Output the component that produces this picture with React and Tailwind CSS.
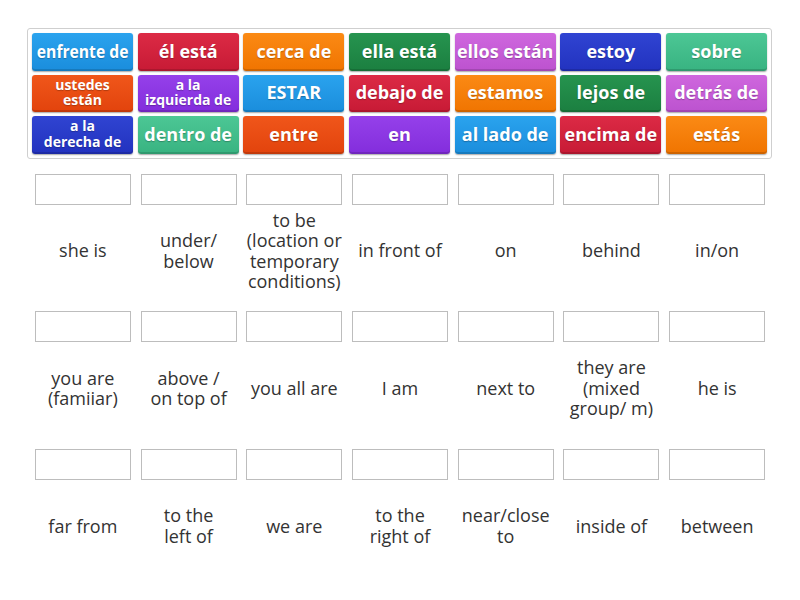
const COLORS = [
  'from-[#2aa3ee] to-[#1a8ddc]', // blue
  'from-[#dc2a45] to-[#c71a35]', // red
  'from-[#fb8a14] to-[#f07400]', // orange
  'from-[#26944f] to-[#1b7f40]', // dark green
  'from-[#cf67de] to-[#bc52cf]', // orchid
  'from-[#3044d2] to-[#2232bf]', // royal blue
  'from-[#4cc795] to-[#38b381]', // teal
  'from-[#f0561a] to-[#e2430c]', // orange red
  'from-[#9540ea] to-[#832ddc]', // purple
]

const TILES = [
  { t: 'enfrente de', squeeze: true },
  { t: 'él está' },
  { t: 'cerca de' },
  { t: 'ella está' },
  { t: 'ellos están' },
  { t: 'estoy' },
  { t: 'sobre' },
  { t: 'ustedes\nestán', small: true },
  { t: 'a la\nizquierda de', small: true },
  { t: 'ESTAR' },
  { t: 'debajo de' },
  { t: 'estamos' },
  { t: 'lejos de' },
  { t: 'detrás de' },
  { t: 'a la\nderecha de', small: true },
  { t: 'dentro de' },
  { t: 'entre' },
  { t: 'en' },
  { t: 'al lado de' },
  { t: 'encima de' },
  { t: 'estás' },
]

const ROWS = [
  ['she is', 'under/\nbelow', 'to be\n(location or\ntemporary\nconditions)', 'in front of', 'on', 'behind', 'in/on'],
  ['you are\n(famiiar)', 'above /\non top of', 'you all are', 'I am', 'next to', 'they are\n(mixed\ngroup/ m)', 'he is'],
  ['far from', 'to the\nleft of', 'we are', 'to the\nright of', 'near/close\nto', 'inside of', 'between'],
]

function Tile({ tile, color }) {
  let span = 'text-[18px] leading-[20px] whitespace-nowrap'
  if (tile.squeeze) span += ' inline-block scale-x-[0.87]'
  return (
    <div
      className={`h-[37.5px] pb-[2px] rounded-[3px] bg-linear-to-b ${color} shadow-[inset_0_-2px_0_rgba(0,0,0,0.14),0_1px_1.5px_rgba(0,0,0,0.35)] flex items-center justify-center text-center text-white font-bold whitespace-pre-line [text-shadow:0_1px_1px_rgba(0,0,0,0.25)] overflow-hidden`}
    >
      {tile.small ? (
        <span className="text-[14px] leading-[15.5px]">{tile.t}</span>
      ) : (
        <span className={span}>{tile.t}</span>
      )}
    </div>
  )
}

export default function App() {
  return (
    <div className="w-[800px] h-[600px] bg-white font-['Open_Sans',sans-serif] overflow-hidden">
      {/* Tile bank */}
      <div className="mt-[28px] ml-[27px] w-[745px] border border-[#cfcfcf] rounded-[3px] p-[4px]">
        <div className="grid grid-cols-7 gap-x-[4.67px] gap-y-[4px]">
          {TILES.map((tile, i) => (
            <Tile key={i} tile={tile} color={COLORS[i % COLORS.length]} />
          ))}
        </div>
      </div>

      {/* Drop targets */}
      <div className="mt-[15px] ml-[30px] w-[740px] flex flex-col gap-y-[14.7px]">
        {ROWS.map((row, r) => (
          <div key={r} className="grid grid-cols-7">
            {row.map((label, i) => (
              <div key={i} className="flex flex-col items-center">
                <div className="w-[96px] h-[31px] border border-[#bdbdbd] bg-white" />
                <div className="h-[92px] w-full flex items-center justify-center text-center text-[18px] leading-[20.5px] text-[#333] whitespace-pre-line">
                  {label}
                </div>
              </div>
            ))}
          </div>
        ))}
      </div>
    </div>
  )
}
